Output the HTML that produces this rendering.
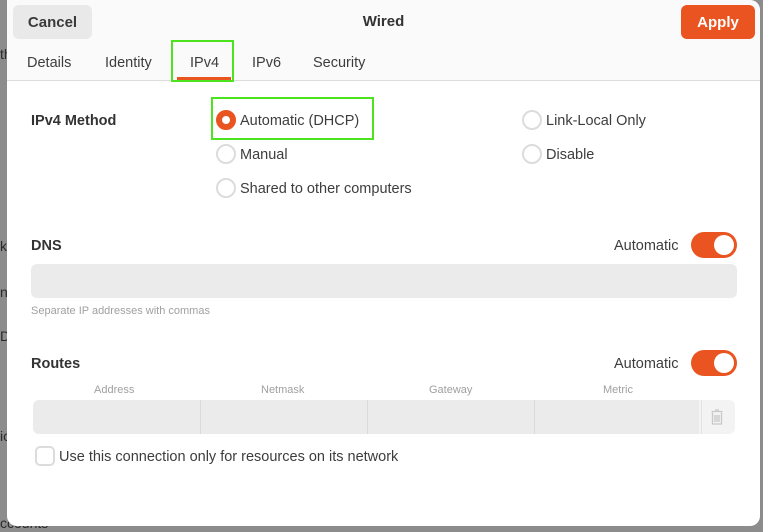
<!DOCTYPE html>
<html><head><meta charset="utf-8"><style>
*{margin:0;padding:0;box-sizing:border-box}
body{width:763px;height:532px;background:#8c8c8c;position:relative;overflow:hidden;font-family:"Liberation Sans",sans-serif;color:#3d3d3d}
.a{position:absolute}
.bgt{color:#2a2a2a;font-size:14px}
#dlg{left:7px;top:0;width:753px;height:526px;background:#fff;border-radius:0 10px 10px 10px;overflow:hidden}
#hdr{left:0;top:0;width:753px;height:81px;background:#fafafa;border-bottom:1px solid #dcdcdc}
.btn{border-radius:6px;font-weight:bold;font-size:15px;text-align:center;line-height:35px}
.tab{font-size:14.5px;color:#3d3d3d;top:55px}
.lbl{font-size:14.5px;font-weight:bold;color:#333;margin-top:2px}
.rad{width:20px;height:20px;border-radius:50%;border:2px solid #dcdcdc;background:#fff}
.rt{font-size:14.5px;color:#3d3d3d;margin-top:2px}
.tog{width:46px;height:26px;border-radius:13px;background:#e95420}
.tog::after{content:"";position:absolute;right:3px;top:3px;width:20px;height:20px;border-radius:50%;background:#fff}
.ent{background:#ebebeb;border-radius:6px}
.ch{font-size:11px;color:#a0a0a0;top:384px}
.g{border:2px solid #4ee31f}
</style></head><body>
<div class="a bgt" style="left:0;top:46px">th</div>
<div class="a bgt" style="left:0;top:238px">ki</div>
<div class="a bgt" style="left:0;top:284px">n</div>
<div class="a bgt" style="left:0;top:328px">De</div>
<div class="a bgt" style="left:0;top:428px">ic</div>
<div class="a bgt" style="left:0;top:515px">ccounts</div>
<div class="a" id="dlg">
 <div class="a" id="hdr"></div>
 <div class="a btn" style="left:6px;top:5px;width:79px;height:34px;background:#e9e9e9;color:#3a3a3a">Cancel</div>
 <div class="a" style="left:0;width:753px;top:13px;text-align:center;font-weight:bold;font-size:15px;color:#333">Wired</div>
 <div class="a btn" style="left:674px;top:5px;width:74px;height:34px;background:#e95420;color:#fff">Apply</div>
 <div class="a tab" style="left:20px">Details</div>
 <div class="a tab" style="left:98px">Identity</div>
 <div class="a tab" style="left:183px">IPv4</div>
 <div class="a" style="left:170px;top:77px;width:54px;height:3px;background:#e95420"></div>
 <div class="a g" style="left:164px;top:40px;width:63px;height:42px"></div>
 <div class="a tab" style="left:245px">IPv6</div>
 <div class="a tab" style="left:306px">Security</div>

 <div class="a lbl" style="left:24px;top:111px">IPv4 Method</div>
 <div class="a rad" style="left:209px;top:110px;border:6px solid #e95420"></div>
 <div class="a rt" style="left:233px;top:111px">Automatic (DHCP)</div>
 <div class="a g" style="left:204px;top:97px;width:163px;height:43px"></div>
 <div class="a rad" style="left:209px;top:144px"></div>
 <div class="a rt" style="left:233px;top:145px">Manual</div>
 <div class="a rad" style="left:209px;top:178px"></div>
 <div class="a rt" style="left:233px;top:179px">Shared to other computers</div>
 <div class="a rad" style="left:515px;top:110px"></div>
 <div class="a rt" style="left:539px;top:111px">Link-Local Only</div>
 <div class="a rad" style="left:515px;top:144px"></div>
 <div class="a rt" style="left:539px;top:145px">Disable</div>

 <div class="a lbl" style="left:24px;top:236px">DNS</div>
 <div class="a rt" style="left:607px;top:236px">Automatic</div>
 <div class="a tog" style="left:684px;top:232px"></div>
 <div class="a ent" style="left:24px;top:264px;width:706px;height:34px"></div>
 <div class="a" style="left:24px;top:305px;font-size:11px;color:#a0a0a0">Separate IP addresses with commas</div>

 <div class="a lbl" style="left:24px;top:354px">Routes</div>
 <div class="a rt" style="left:607px;top:354px">Automatic</div>
 <div class="a tog" style="left:684px;top:350px"></div>
 <div class="a ch" style="left:87px">Address</div>
 <div class="a ch" style="left:254px">Netmask</div>
 <div class="a ch" style="left:422px">Gateway</div>
 <div class="a ch" style="left:596px">Metric</div>
 <div class="a ent" style="left:26px;top:400px;width:702px;height:34px;background:#f3f3f3"></div>
 <div class="a" style="left:26px;top:400px;width:666px;height:34px;background:#ebebeb;border-radius:6px 0 0 6px"></div>
 <div class="a" style="left:193px;top:400px;width:1px;height:34px;background:#dadada"></div>
 <div class="a" style="left:360px;top:400px;width:1px;height:34px;background:#dadada"></div>
 <div class="a" style="left:527px;top:400px;width:1px;height:34px;background:#dadada"></div>
 <div class="a" style="left:694px;top:400px;width:1px;height:34px;background:#e3e3e3"></div>
 <svg class="a" style="left:703px;top:408px" width="14" height="18" viewBox="0 0 14 18"><g fill="none" stroke="#c8c8c8" stroke-width="1.3"><path d="M5 2h4M1.5 3.5h11M2.5 4.5v11.5h9V4.5M5 7v7M7 7v7M9 7v7"/></g></svg>
 <div class="a" style="left:28px;top:446px;width:20px;height:20px;border:2px solid #dcdcdc;border-radius:5px"></div>
 <div class="a rt" style="left:52px;top:447px">Use this connection only for resources on its network</div>
</div>
</body></html>
